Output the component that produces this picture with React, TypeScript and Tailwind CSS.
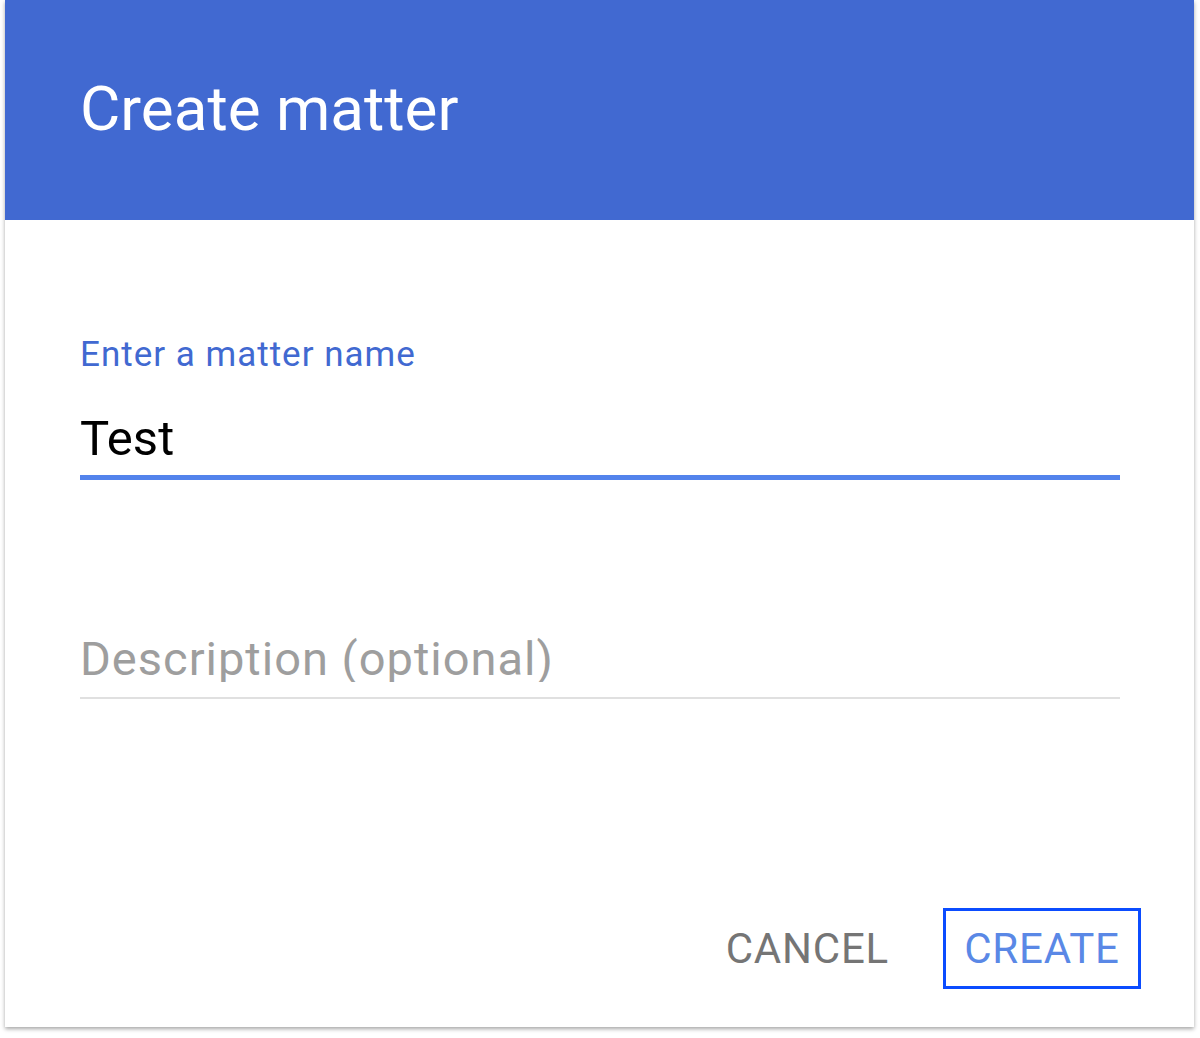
import React, { useState } from "react";

export default function App() {
  const [name, setName] = useState("Test");
  const [description, setDescription] = useState("");

  return (
    <div className="w-[1200px] h-[1038px] bg-white font-['Roboto',sans-serif]">
      <div className="ml-[5px] w-[1189px] h-[1027px] bg-white flex flex-col shadow-[0_2px_4px_rgba(0,0,0,0.35)]">
        {/* Header */}
        <div className="h-[220px] bg-[#4169d1] px-[75px] pt-[78px]">
          <h1 className="text-[62px] leading-[62px] text-white font-normal">Create matter</h1>
        </div>

        {/* Body */}
        <div className="flex-1 flex flex-col px-[75px]">
          <label className="mt-[117px] text-[35px] leading-[35px] tracking-[1px] text-[#4169d1]">
            Enter a matter name
          </label>
          <input
            value={name}
            onChange={(e) => setName(e.target.value)}
            className="mt-[42px] h-[49px] text-[49px] leading-[49px] text-black outline-none bg-transparent w-full"
          />
          <div className="mt-[12px] h-[5px] w-[1040px] bg-[#5383ec]" />

          <input
            value={description}
            onChange={(e) => setDescription(e.target.value)}
            placeholder="Description (optional)"
            className="mt-[155px] h-[47px] text-[47px] leading-[47px] tracking-[1px] text-black placeholder:text-[#9e9e9e] outline-none bg-transparent w-full"
          />
          <div className="mt-[15px] h-[2px] w-[1040px] bg-[#e0e0e0]" />

          <div className="mt-[209px] -mr-[22px] flex items-center justify-end gap-[54px]">
            <button className="text-[42px] leading-[42px] tracking-[0.8px] text-[#757575] uppercase">Cancel</button>
            <button className="w-[198px] h-[81px] border-[3px] border-[#0b4cff] text-[42px] leading-[42px] tracking-[0.8px] text-[#5a88e6] uppercase flex items-center justify-center">
              Create
            </button>
          </div>
        </div>
      </div>
    </div>
  );
}
